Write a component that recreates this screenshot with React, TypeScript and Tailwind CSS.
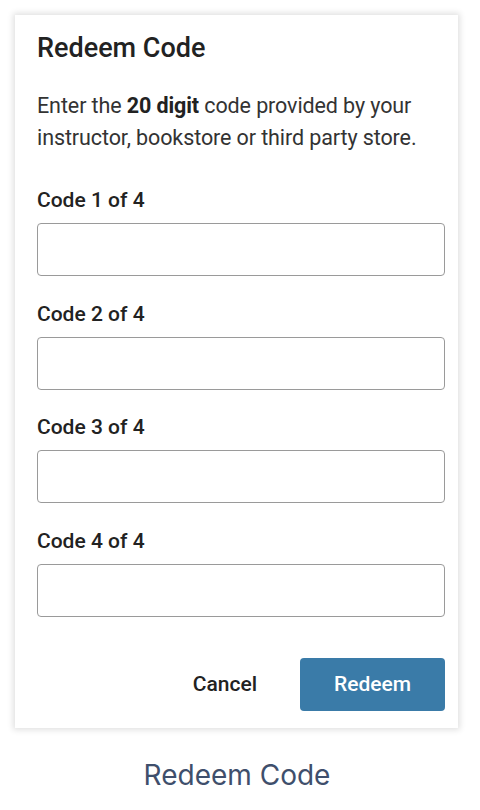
import React from "react";

export default function App() {
  const codes = [1, 2, 3, 4];
  return (
    <div className="w-[480px] h-[810px] bg-white" style={{ fontFamily: "Roboto, 'Liberation Sans', sans-serif" }}>
      <div className="pt-[15px] pl-[15px]">
        <div className="w-[443px] h-[713px] bg-white shadow-[0_0_6px_2px_rgba(0,0,0,0.12)] pl-[22px] pr-[13px] pt-[17px] flex flex-col">
          <h1 className="text-[27px] leading-[32px] font-medium text-[#222]">Redeem Code</h1>
          <p className="mt-[26px] text-[21.5px] leading-[32px] text-[#333] tracking-[-0.1px]">
            Enter the <b className="font-bold text-[#222]">20 digit</b> code provided by your instructor, bookstore or third party store.
          </p>
          <div className="mt-[34px] flex flex-col">
            {codes.map((n) => (
              <div key={n} className="flex flex-col mb-[25.5px]">
                <label className="text-[21px] leading-[24px] font-medium text-[#222]">Code {n} of 4</label>
                <input className="mt-[11px] h-[53px] w-[408px] border border-[#9a9a9a] rounded-[4px] bg-white" />
              </div>
            ))}
          </div>
          <div className="mt-[16px] flex justify-end items-center w-[408px]">
            <button className="text-[21px] font-medium text-[#222] mr-[43px]">Cancel</button>
            <button className="w-[145px] h-[53px] rounded-[4px] bg-[#3a7ba8] text-white text-[21px] font-medium">Redeem</button>
          </div>
        </div>
      </div>
      <div className="mt-[30px] text-center text-[28px] leading-[34px] text-[#3f4f6c] pr-[6px]" style={{ fontFamily: "Inter, sans-serif" }}>
        Redeem Code
      </div>
    </div>
  );
}
